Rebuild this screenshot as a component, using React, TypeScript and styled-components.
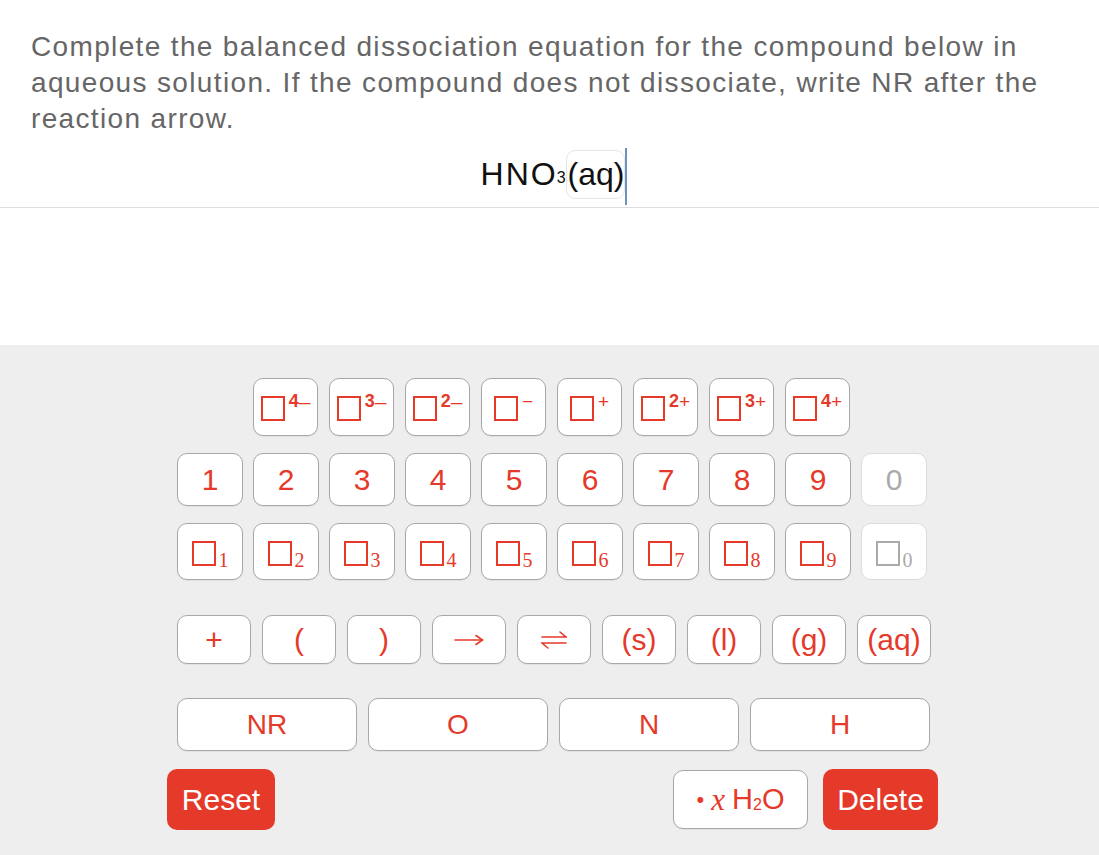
import React from "react"
import styled, { createGlobalStyle } from "styled-components"

const RED = "#e5392a"
const SANS = `"Liberation Sans", Arial, sans-serif`
const SERIF = `"Liberation Serif", "Times New Roman", serif`

const GlobalStyle = createGlobalStyle`
	html, body {
		margin: 0;
		padding: 0;
		background: #fff;
		font-family: ${SANS};
	}
`

const Page = styled.div`
	width: 1099px;
	min-height: 855px;
	display: flex;
	flex-direction: column;
`

const Question = styled.p`
	margin: 0;
	padding: 29px 40px 0 31px;
	font-size: 28px;
	line-height: 36px;
	letter-spacing: 1.35px;
	color: #666;
`

const EquationRow = styled.div`
	margin-top: 11px;
	height: 57px;
	display: flex;
	align-items: center;
	justify-content: center;
	padding-left: 9px;
	font-size: 32px;
	color: #111;
`

const Formula = styled.span`
	display: inline-flex;
	align-items: baseline;
	line-height: 48px;
	letter-spacing: 2px;
`

const SmallSub = styled.sub`
	font-size: 16px;
	vertical-align: baseline;
	position: relative;
	top: -2px;
	margin: 0 0 0 -1px;
	letter-spacing: 0;
`

const StateBox = styled.span`
	display: inline-block;
	height: 47px;
	line-height: 47px;
	padding: 0 0 0 1px;
	border: 1px solid #e6e6e6;
	border-radius: 9px;
	letter-spacing: 0;
`

const Cursor = styled.span`
	width: 2px;
	height: 57px;
	background: #6b93bd;
`

const Divider = styled.hr`
	margin: 2px 0 0;
	border: 0;
	border-top: 1px solid #dedede;
`

const Panel = styled.div`
	margin-top: 137px;
	flex: 1;
	background: #eeeeee;
	padding: 33px 0 25px 177px;
`

const Keypad = styled.div`
	width: 753px;
`

const Grid = styled.div<{ $cols: number; $w: number; $gap: number; $h: number; $top: number }>`
	display: grid;
	grid-template-columns: repeat(${p => p.$cols}, ${p => p.$w}px);
	column-gap: ${p => p.$gap}px;
	grid-auto-rows: ${p => p.$h}px;
	margin-top: ${p => p.$top}px;
`

const Key = styled.button<{ $off?: boolean; $start?: number; $size?: number }>`
	${p => (p.$start ? `grid-column-start: ${p.$start};` : "")}
	display: flex;
	align-items: center;
	justify-content: center;
	padding: 0;
	background: #fff;
	border: 1px solid ${p => (p.$off ? "#dcdcdc" : "#a8a8a8")};
	border-radius: 10px;
	box-shadow: ${p => (p.$off ? "none" : "0 1px 1px rgba(0, 0, 0, 0.06)")};
	color: ${p => (p.$off ? "#aaa" : RED)};
	font-family: ${SANS};
	font-size: ${p => p.$size ?? 30}px;
	line-height: 1;
	cursor: pointer;
`

const ChargeKey = styled(Key)`
	width: 65px;
`

const Square = styled.span<{ $off?: boolean }>`
	display: inline-block;
	width: 20px;
	height: 21px;
	border: 2px solid ${p => (p.$off ? "#aaa" : RED)};
`

const Charge = styled.span`
	align-self: flex-start;
	display: inline-flex;
	align-items: center;
	margin: -3px 0 0 4px;
	font-size: 18px;
	line-height: 17px;
`

const ChargeNum = styled.b`
	font-weight: 700;
`

const ChargeSign = styled.span<{ $wide?: boolean }>`
	font-size: ${p => (p.$wide ? 21 : 19)}px;
	font-weight: 400;
`

const SubNum = styled.span`
	align-self: flex-end;
	margin: 0 0 -4px 3px;
	font-family: ${SERIF};
	font-size: 20px;
	line-height: 20px;
`

const KeyInner = styled.span`
	display: inline-flex;
	align-items: center;
	margin-top: 3px;
`

const ActionRow = styled.div`
	display: flex;
	align-items: center;
	margin: 18px -8px 0 -10px;
	height: 61px;
`

const RedButton = styled.button<{ $w: number }>`
	width: ${p => p.$w}px;
	height: 61px;
	padding: 0;
	border: 0;
	border-radius: 10px;
	background: ${RED};
	color: #fff;
	font-family: ${SANS};
	font-size: 30px;
	cursor: pointer;
`

const Spacer = styled.div`
	flex: 1;
`

const HydrateKey = styled(Key)`
	width: 135px;
	height: 59px;
	margin-right: 15px;
	font-size: 29px;
	gap: 7px;
`

const Dot = styled.span`
	font-size: 22px;
`

const ItalicX = styled.i`
	font-family: ${SERIF};
	font-size: 31px;
`

const Hsub = styled.span`
	font-size: 16px;
	margin-top: 10px;
`

const Water = styled.span`
	display: inline-flex;
	align-items: center;
`

const charges: Array<[string, string]> = [
	["4", "–"], ["3", "–"], ["2", "–"], ["", "−"], ["", "+"], ["2", "+"], ["3", "+"], ["4", "+"],
]

const digits = ["1", "2", "3", "4", "5", "6", "7", "8", "9", "0"]

const ArrowIcon = () => (
	<svg width="30" height="12" viewBox="0 0 30 12" fill="none" stroke={RED} strokeWidth="1.6" strokeLinecap="round">
		<path d="M1 6H28" />
		<path d="M22 1.5L28.5 6L22 10.5" />
	</svg>
)

const EquilibriumIcon = () => (
	<svg width="26" height="18" viewBox="0 0 26 18" fill="none" stroke={RED} strokeWidth="1.6" strokeLinecap="round">
		<path d="M1 6H25L19 1" />
		<path d="M25 12H1L7 17" />
	</svg>
)

const App = () => {

	return (

		<Page>

			<GlobalStyle />

			<Question>
				Complete the balanced dissociation equation for the compound below in aqueous solution. If the compound does not dissociate, write NR after the reaction arrow.
			</Question>

			<EquationRow>
				<Formula>
					HNO<SmallSub>3</SmallSub>
					<StateBox>(aq)</StateBox>
				</Formula>
				<Cursor />
			</EquationRow>

			<Divider />

			<Panel>

				<Keypad>

					{/* charge templates */}
					<Grid $cols={10} $w={66} $gap={10} $h={58} $top={0}>
						{charges.map(([n, s], i) => (
							<ChargeKey key={i} $start={i === 0 ? 2 : undefined}>
								<KeyInner>
									<Square />
									<Charge>
										{n && <ChargeNum>{n}</ChargeNum>}
										<ChargeSign $wide={s === "–"}>{s}</ChargeSign>
									</Charge>
								</KeyInner>
							</ChargeKey>
						))}
					</Grid>

					<Grid $cols={10} $w={66} $gap={10} $h={53} $top={17}>
						{digits.map(d => (
							<Key key={d} $off={d === "0"}>{d}</Key>
						))}
					</Grid>

					{/* subscript templates */}
					<Grid $cols={10} $w={66} $gap={10} $h={57} $top={17}>
						{digits.map(d => (
							<Key key={d} $off={d === "0"}>
								<KeyInner>
									<Square $off={d === "0"} />
									<SubNum>{d}</SubNum>
								</KeyInner>
							</Key>
						))}
					</Grid>

					<Grid $cols={9} $w={74} $gap={11} $h={49} $top={35}>
						<Key>+</Key>
						<Key>(</Key>
						<Key>)</Key>
						<Key><ArrowIcon /></Key>
						<Key><EquilibriumIcon /></Key>
						<Key>(s)</Key>
						<Key>(l)</Key>
						<Key>(g)</Key>
						<Key>(aq)</Key>
					</Grid>

					<Grid $cols={4} $w={180} $gap={11} $h={53} $top={34}>
						<Key $size={28}>NR</Key>
						<Key $size={28}>O</Key>
						<Key $size={28}>N</Key>
						<Key $size={28}>H</Key>
					</Grid>

					<ActionRow>
						<RedButton $w={108}>Reset</RedButton>
						<Spacer />
						<HydrateKey>
							<Dot>•</Dot>
							<ItalicX>x</ItalicX>
							<Water>H<Hsub>2</Hsub>O</Water>
						</HydrateKey>
						<RedButton $w={115}>Delete</RedButton>
					</ActionRow>

				</Keypad>

			</Panel>

		</Page>

	)

}

export default App
